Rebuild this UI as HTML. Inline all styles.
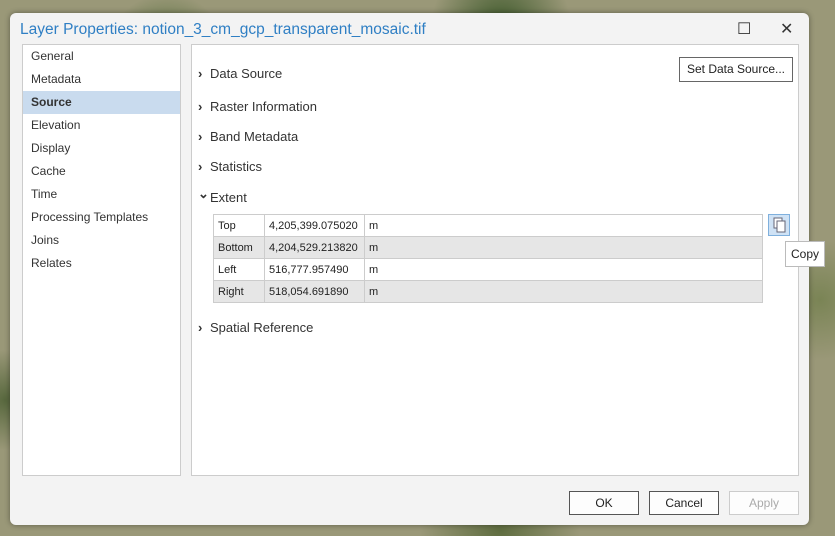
<!DOCTYPE html>
<html><head><style>
body{margin:0;width:835px;height:536px;overflow:hidden;font-family:"Liberation Sans",sans-serif;
background:radial-gradient(circle at 20% 10%,#4e6a36 0,transparent 60px),radial-gradient(circle at 60% 5%,#3f5a2c 0,transparent 70px),radial-gradient(circle at 820px 300px,#7a8455 0,transparent 60px),radial-gradient(circle at 5px 400px,#58683e 0,transparent 50px),radial-gradient(circle at 500px 530px,#5f6d40 0,transparent 80px),#9a9878;position:relative}
.dlg{position:absolute;left:10px;top:13px;width:799px;height:512px;background:#f3f3f3;border-radius:6px;box-shadow:0 0 6px rgba(0,0,0,.4)}
.title{position:absolute;left:10px;top:8px;font-size:15.5px;color:#2f7fc4}
.ctl{position:absolute;top:6px;font-size:16px;color:#333}
.list{position:absolute;left:12px;top:31px;width:157px;height:430px;background:#fff;border:1px solid #ccc}
.list div{height:23px;line-height:23px;padding-left:8px;font-size:12px;color:#333}
.list .sel{background:#c9dbee;font-weight:bold}
.panel{position:absolute;left:181px;top:31px;width:606px;height:430px;background:#fff;border:1px solid #ccc}
.h{position:absolute;left:18px;font-size:13px;color:#333}
.h i{position:absolute;left:-12px;font-style:normal;font-weight:bold}
table{position:absolute;left:21px;top:169px;width:550px;border-collapse:collapse;font-size:11px;color:#222;border:1px solid #ccc}
td{border:1px solid #ccc;height:21px;padding:0 4px}
tr:nth-child(2) td,tr:nth-child(4) td{background:#e6e6e6}
.btn{position:absolute;top:478px;height:22px;width:68px;border:1px solid #555;background:#fdfdfd;font-size:12px;text-align:center;line-height:22px;color:#222}
</style></head><body>
<div class="dlg">
<div class="title">Layer Properties: notion_3_cm_gcp_transparent_mosaic.tif</div>
<div class="ctl" style="left:727px">☐</div><div class="ctl" style="left:770px">✕</div>
<div class="list"><div>General</div><div>Metadata</div><div class="sel">Source</div><div>Elevation</div><div>Display</div><div>Cache</div><div>Time</div><div>Processing Templates</div><div>Joins</div><div>Relates</div></div>
<div class="panel">
<div class="h" style="top:21px"><i>›</i>Data Source</div>
<div style="position:absolute;left:487px;top:12px;width:112px;height:23px;border:1px solid #666;font-size:12px;line-height:23px;text-align:center;color:#222">Set Data Source...</div>
<div class="h" style="top:54px"><i>›</i>Raster Information</div>
<div class="h" style="top:84px"><i>›</i>Band Metadata</div>
<div class="h" style="top:114px"><i>›</i>Statistics</div>
<div class="h" style="top:145px"><i style="top:-4px">⌄</i>Extent</div>
<table><tr><td style="width:42px">Top</td><td style="width:91px">4,205,399.075020</td><td>m</td></tr>
<tr><td>Bottom</td><td>4,204,529.213820</td><td>m</td></tr>
<tr><td>Left</td><td>516,777.957490</td><td>m</td></tr>
<tr><td>Right</td><td>518,054.691890</td><td>m</td></tr></table>
<div style="position:absolute;left:576px;top:169px;width:20px;height:20px;background:#cfe2f5;border:1px solid #7fb0dd"><svg width="20" height="20"><rect x="5" y="3" width="8" height="10" fill="#fff" stroke="#667"/><rect x="8" y="6" width="8" height="11" fill="#fff" stroke="#667"/></svg></div>
<div class="h" style="top:275px"><i>›</i>Spatial Reference</div>
</div>
<div style="position:absolute;left:775px;top:228px;width:38px;height:24px;background:#fff;border:1px solid #bbb;font-size:12px;line-height:24px;text-align:center;color:#222">Copy</div>
<div class="btn" style="left:559px">OK</div>
<div class="btn" style="left:639px">Cancel</div>
<div class="btn" style="left:719px;color:#aaa;border-color:#ccc">Apply</div>
</div>
</body></html>
